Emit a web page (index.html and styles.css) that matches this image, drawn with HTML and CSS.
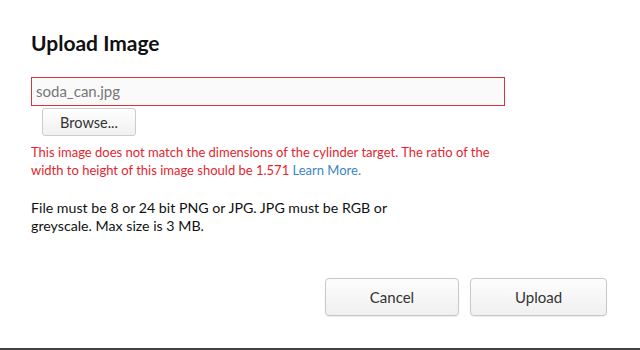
FILE: index.html
```html
<!DOCTYPE html>
<html>
<head>
    <meta charset="utf-8">
    <title>Upload Image</title>
    <link rel="stylesheet" href="styles.css">
</head>
<body>
    <div class="dialog">
        <h1>Upload Image</h1>
        <div class="file-field">
            <div class="file-name">soda_can.jpg</div>
            <button class="browse">Browse...</button>
        </div>
        <p class="error">This image does not match the dimensions of the cylinder target. The ratio of the<br>width to height of this image should be 1.571 <a href="#">Learn More.</a></p>
        <p class="hint">File must be 8 or 24 bit PNG or JPG. JPG must be RGB or<br>greyscale. Max size is 3 MB.</p>
        <div class="actions">
            <button class="btn cancel">Cancel</button>
            <button class="btn upload">Upload</button>
        </div>
    </div>
    <div class="bottom-bar"></div>
</body>
</html>
```

FILE: styles.css
```css
body {
    margin: 0;
    font-family: Lato, "Open Sans", sans-serif;
    background-color: #fff;
    color: #111;
    height: 350px;
    display: flex;
    flex-direction: column;
}
.dialog {
    flex: 1;
    padding: 0 33px 0 31px;
}
h1 {
    font-size: 21px;
    font-weight: bold;
    margin: 30px 0 0;
    line-height: 26px;
}
.file-field {
    margin-top: 21px;
}
.file-name {
    width: 468px;
    height: 27px;
    border: 1px solid #d8343c;
    background-color: #fafafa;
    color: #777;
    font-size: 15px;
    line-height: 27px;
    padding-left: 4px;
}
.browse {
    margin: 2px 0 0 11px;
    width: 94px;
    height: 28px;
    border: 1px solid #ccc;
    border-radius: 3px;
    background: linear-gradient(#fff, #f0f0f0);
    font-family: inherit;
    font-size: 14.5px;
    color: #333;
    padding: 0;
}
.error {
    color: #e2262f;
    font-size: 13px;
    line-height: 18px;
    margin: 7px 0 0;
    white-space: nowrap;
}
.error a {
    color: #3b86c4;
    text-decoration: none;
}
.hint {
    font-size: 14.2px;
    line-height: 18px;
    margin: 20px 0 0;
    white-space: nowrap;
}
.actions {
    display: flex;
    justify-content: flex-end;
    gap: 11px;
    margin-top: 43px;
}
.btn {
    height: 38px;
    border: 1px solid #c8c8c8;
    border-radius: 4px;
    background: linear-gradient(#fdfdfd, #f0f0f0);
    font-family: inherit;
    font-size: 15px;
    color: #333;
    box-shadow: 0 1px 1px rgba(0, 0, 0, 0.08);
}
.cancel {
    width: 134px;
}
.upload {
    width: 137px;
}
.bottom-bar {
    height: 2px;
    background-color: #444;
}
```
